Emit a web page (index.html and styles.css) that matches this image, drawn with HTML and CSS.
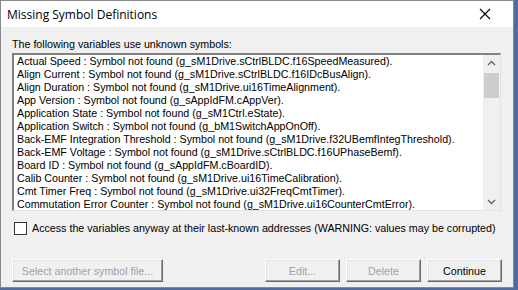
FILE: index.html
```html
<!DOCTYPE html>
<html>
<head>
<meta charset="utf-8">
<link rel="stylesheet" href="styles.css">
</head>
<body>
<div class="window">
  <div class="titlebar">
    <span class="title">Missing Symbol Definitions</span>
    <svg class="close" width="12" height="12" viewBox="0 0 12 12"><path d="M1 1 L11 11 M11 1 L1 11" stroke="#000" stroke-width="1.1" fill="none"/></svg>
  </div>
  <div class="content">
    <div class="label">The following variables use unknown symbols:</div>
    <div class="listbox">
      <div class="rows">
        <div class="row">Actual Speed : Symbol not found (g_sM1Drive.sCtrlBLDC.f16SpeedMeasured).</div>
        <div class="row">Align Current : Symbol not found (g_sM1Drive.sCtrlBLDC.f16IDcBusAlign).</div>
        <div class="row">Align Duration : Symbol not found (g_sM1Drive.ui16TimeAlignment).</div>
        <div class="row">App Version : Symbol not found (g_sAppIdFM.cAppVer).</div>
        <div class="row">Application State : Symbol not found (g_sM1Ctrl.eState).</div>
        <div class="row">Application Switch : Symbol not found (g_bM1SwitchAppOnOff).</div>
        <div class="row">Back-EMF Integration Threshold : Symbol not found (g_sM1Drive.f32UBemfIntegThreshold).</div>
        <div class="row">Back-EMF Voltage : Symbol not found (g_sM1Drive.sCtrlBLDC.f16UPhaseBemf).</div>
        <div class="row">Board ID : Symbol not found (g_sAppIdFM.cBoardID).</div>
        <div class="row">Calib Counter : Symbol not found (g_sM1Drive.ui16TimeCalibration).</div>
        <div class="row">Cmt Timer Freq : Symbol not found (g_sM1Drive.ui32FreqCmtTimer).</div>
        <div class="row">Commutation Error Counter : Symbol not found (g_sM1Drive.ui16CounterCmtError).</div>
      </div>
      <div class="scrollbar">
        <svg class="arrow" width="17" height="17" viewBox="0 0 17 17"><path d="M5 10 L8.5 6.5 L12 10" stroke="#606060" stroke-width="1.3" fill="none"/></svg>
        <div class="track"><div class="thumb"></div></div>
        <svg class="arrow" width="17" height="17" viewBox="0 0 17 17"><path d="M5 7 L8.5 10.5 L12 7" stroke="#606060" stroke-width="1.3" fill="none"/></svg>
      </div>
    </div>
    <label class="check">
      <span class="box"></span>
      <span class="checktext">Access the variables anyway at their last-known addresses (WARNING: values may be corrupted)</span>
    </label>
    <div class="buttons">
      <button class="btn wide" disabled>Select another symbol file...</button>
      <div class="spacer"></div>
      <button class="btn" disabled>Edit...</button>
      <button class="btn" disabled>Delete</button>
      <button class="btn">Continue</button>
    </div>
  </div>
</div>
</body>
</html>
```

FILE: styles.css
```css
html, body {
  margin: 0;
  padding: 0;
}
body {
  width: 518px;
  height: 290px;
  background: #4d6d9e;
  overflow: hidden;
  font-family: "Liberation Sans", Arial, sans-serif;
  font-size: 10.7px;
  color: #000;
}
.window {
  width: 512px;
  height: 286px;
  border: 1px solid #8a8a8a;
  background: #f0f0f0;
  display: flex;
  flex-direction: column;
}
.titlebar {
  height: 26px;
  background: #fff;
  display: flex;
  align-items: center;
  padding-left: 6px;
  padding-right: 22px;
}
.title {
  flex: 1;
  font-family: "Open Sans", "Noto Sans", sans-serif;
  font-size: 12px;
}
.close {
  display: block;
}
.content {
  padding: 11px 11px 0 11px;
  display: flex;
  flex-direction: column;
}
.label {
  height: 15px;
  line-height: 13px;
}
.listbox {
  height: 155px;
  background: #fff;
  border-top: 2px solid #828282;
  border-left: 2px solid #828282;
  border-bottom: 1px solid #e3e3e3;
  border-right: 1px solid #e3e3e3;
  display: flex;
  width: 486px;
}
.rows {
  flex: 1;
  padding-left: 3px;
  overflow: hidden;
}
.row {
  height: 13px;
  line-height: 13px;
  white-space: nowrap;
}
.scrollbar {
  width: 17px;
  background: #f0f0f0;
  display: flex;
  flex-direction: column;
}
.arrow {
  display: block;
}
.track {
  flex: 1;
}
.thumb {
  height: 25px;
  margin: 1px 1px 0 1px;
  background: #cdcdcd;
}
.check {
  display: flex;
  align-items: center;
  gap: 5px;
  margin-top: 10px;
  height: 14px;
  padding-left: 2px;
}
.checktext {
  white-space: nowrap;
}
.box {
  width: 11px;
  height: 11px;
  border: 1px solid #333;
  background: #fff;
}
.buttons {
  display: flex;
  gap: 6px;
  margin-top: 24px;
}
.spacer {
  flex: 1;
}
.btn {
  width: 75px;
  height: 23px;
  padding: 0;
  font-family: "Liberation Sans", Arial, sans-serif;
  font-size: 10.7px;
  color: #000;
  background: #f0f0f0;
  border-top: 1px solid #fff;
  border-left: 1px solid #fff;
  border-right: 1px solid #696969;
  border-bottom: 1px solid #696969;
  box-shadow: inset -1px -1px 0 #a0a0a0, inset 1px 1px 0 #e3e3e3;
}
.btn:disabled {
  color: #a0a0a0;
}
.btn.wide {
  width: 151px;
}
```
